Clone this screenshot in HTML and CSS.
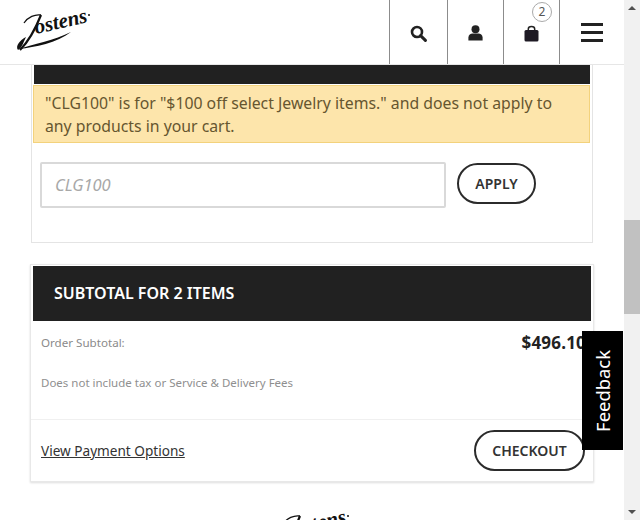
FILE: index.html
```html
<!DOCTYPE html>
<html lang="en">
<head>
  <meta charset="UTF-8">
  <title>Shopping Cart</title>
  <link rel="stylesheet" href="styles.css">
</head>
<body>

  <div class="pagina">
    <!-- HEADER -->
    <header class="topo">
      <a class="logo" href="#">
        <svg class="logo-svg" width="76" height="40" viewBox="0 0 76 40">
          <path d="M3 37 C0 33 5 27 11 24 C8 30 7 35 3 37 Z M4 36 C18 31 38 28 56 19 C42 30 20 34 4 36 Z" fill="#111"/>
          <path d="M26 2 C22 12 14 28 5 37" fill="none" stroke="#111" stroke-width="2.2"/>
          <path d="M9 10 C13 4 20 1 26 2" fill="none" stroke="#111" stroke-width="1.3"/>
          <text class="logo-texto" x="21" y="21" transform="rotate(-13 21 21)">ostens</text>
          <circle cx="74" cy="2" r="1" fill="#111"/>
        </svg>
      </a>
      <nav class="acoes">
        <a class="acao acao-busca" href="#">
          <svg width="17" height="17" viewBox="0 0 17 17"><circle cx="7" cy="7" r="5" fill="none" stroke="#222" stroke-width="2.6"/><path d="M10.6 10.6 L15.4 15.4" stroke="#222" stroke-width="3" stroke-linecap="round"/></svg>
        </a>
        <a class="acao" href="#">
          <svg width="15" height="16" viewBox="0 0 15 16"><circle cx="7.5" cy="4.2" r="4" fill="#222"/><path d="M0.4 15.6 V12.5 C0.4 9.8 2.6 8.6 4.6 8.6 H10.4 C12.4 8.6 14.6 9.8 14.6 12.5 V15.6 Z" fill="#222"/></svg>
        </a>
        <a class="acao acao-sacola" href="#">
          <span class="contador">2</span>
          <svg width="15" height="17" viewBox="0 0 15 17"><path d="M4.3 6 V4 C4.3 0.6 10.7 0.6 10.7 4 V6" fill="none" stroke="#222" stroke-width="1.5"/><rect x="0.5" y="5" width="14" height="11.5" rx="1.5" fill="#1e1a24"/></svg>
        </a>
        <a class="acao acao-menu" href="#">
          <span></span><span></span><span></span>
        </a>
      </nav>
    </header>

    <main class="conteudo">
      <!-- PROMO -->
      <section class="cartao cartao-promo">
        <div class="faixa-topo"></div>
        <div class="aviso">"CLG100" is for "$100 off select Jewelry items." and does not apply to any products in your cart.</div>
        <form class="promo-form">
          <input class="promo-input" type="text" placeholder="CLG100">
          <button class="botao botao-apply" type="button">APPLY</button>
        </form>
      </section>

      <!-- SUBTOTAL -->
      <section class="cartao cartao-total">
        <h2 class="total-titulo">SUBTOTAL FOR 2 ITEMS</h2>
        <div class="total-corpo">
          <div class="total-linha">
            <span class="total-label">Order Subtotal:</span>
            <strong class="total-valor">$496.10</strong>
          </div>
          <p class="total-nota">Does not include tax or Service &amp; Delivery Fees</p>
        </div>
        <div class="total-rodape">
          <a class="link-pagamento" href="#">View Payment Options</a>
          <button class="botao botao-checkout" type="button">CHECKOUT</button>
        </div>
      </section>

      <div class="rodape-logo">
        <svg class="logo-svg" width="76" height="40" viewBox="0 0 76 40">
          <path d="M3 37 C0 33 5 27 11 24 C8 30 7 35 3 37 Z M4 36 C18 31 38 28 56 19 C42 30 20 34 4 36 Z" fill="#111"/>
          <path d="M26 2 C22 12 14 28 5 37" fill="none" stroke="#111" stroke-width="2.2"/>
          <path d="M9 10 C13 4 20 1 26 2" fill="none" stroke="#111" stroke-width="1.3"/>
          <text class="logo-texto" x="21" y="21" transform="rotate(-13 21 21)">ostens</text>
          <circle cx="74" cy="2" r="1" fill="#111"/>
        </svg>
      </div>
    </main>

    <a class="feedback" href="#"><span>Feedback</span></a>
  </div>

  <!-- SCROLLBAR -->
  <div class="barra">
    <span class="seta seta-cima"></span>
    <div class="trilho"><div class="polegar"></div></div>
    <span class="seta seta-baixo"></span>
  </div>

</body>
</html>
```

FILE: styles.css
```css
html, body {
  height: 100%;
}

body {
  margin: 0;
  display: flex;
  height: 520px;
  overflow: hidden;
  background: #fff;
  color: #222;
  font-family: "Noto Sans", "Open Sans", sans-serif;
}

.pagina {
  position: relative;
  width: 624px;
  height: 520px;
  overflow: hidden;
}

/* header */

.topo {
  box-sizing: border-box;
  display: flex;
  justify-content: space-between;
  height: 65px;
  border-bottom: 1px solid #e6e6e6;
}

.logo {
  display: block;
  padding: 13px 0 0 15px;
}

.logo-svg {
  overflow: visible;
}

.logo-texto {
  font-family: "Liberation Serif", serif;
  font-style: italic;
  font-weight: 700;
  font-size: 21px;
  fill: #111;
}

.acoes {
  display: flex;
}

.acao {
  box-sizing: border-box;
  display: flex;
  justify-content: center;
  align-items: center;
  width: 56px;
  padding-top: 2px;
  border-left: 1px solid #8c8c8c;
}

.acao-busca {
  width: 58px;
}

.acao-sacola {
  position: relative;
}

.contador {
  position: absolute;
  top: 2px;
  left: 28px;
  width: 18px;
  height: 18px;
  border: 1px solid #aaa;
  border-radius: 50%;
  font-size: 12px;
  line-height: 18px;
  text-align: center;
  color: #555;
}

.acao-menu {
  flex-direction: column;
  gap: 5px;
  width: 65px;
  padding: 1px 0 0;
}

.acao-menu span {
  display: block;
  width: 22px;
  height: 3px;
  margin-right: 1px;
  background: #222;
}

/* content */

.conteudo {
  padding: 0 30px;
}

.cartao {
  box-sizing: border-box;
  background: #fff;
}

.cartao-promo {
  height: 178px;
  margin: 0 1px;
  padding: 0 2px;
  border: 1px solid #e4e4e4;
  border-top: 0;
}

.faixa-topo {
  height: 19px;
  background: #212121;
}

.aviso {
  margin: 1px 0 0 -1px;
  padding: 6px 11px 5px;
  height: 58px;
  box-sizing: border-box;
  background: #fde5ab;
  border: 1px solid #f3d27c;
  font-size: 15.8px;
  line-height: 23px;
  color: #665630;
}

.promo-form {
  display: flex;
  align-items: flex-start;
  gap: 11px;
  margin: 19px 0 0 6px;
}

.promo-input {
  box-sizing: border-box;
  width: 406px;
  height: 46px;
  padding: 0 13px 2px;
  border: 2px solid #d9d9d9;
  border-radius: 2px;
  font-family: inherit;
  font-size: 16.5px;
  font-style: italic;
}

.promo-input::placeholder {
  color: #a8a8a8;
}

.botao {
  box-sizing: border-box;
  height: 41px;
  background: #fff;
  border: 2px solid #2b2b2b;
  border-radius: 21px;
  font-family: inherit;
  font-size: 14px;
  font-weight: 600;
  color: #333;
}

.botao-apply {
  width: 79px;
  margin-top: 1px;
  padding: 0;
}

.cartao-total {
  height: 218px;
  margin-top: 21px;
  padding-top: 1px;
  border: 1px solid #e8e8e8;
  box-shadow: 0 1px 2px #ddd;
}

.total-titulo {
  height: 55px;
  margin: 0 2px;
  padding-left: 21px;
  background: #212121;
  color: #fff;
  font-size: 16px;
  font-weight: 600;
  line-height: 55px;
}

.total-corpo {
  box-sizing: border-box;
  height: 99px;
  padding: 0 7px 0 10px;
  border-bottom: 1px solid #f0f0f0;
}

.total-linha {
  display: flex;
  justify-content: space-between;
  padding-top: 10px;
}

.total-label {
  margin-top: 4px;
  font-size: 11.6px;
  color: #8a8a8a;
}

.total-valor {
  font-size: 17px;
  letter-spacing: 0.2px;
  font-weight: 700;
  color: #222;
}

.total-nota {
  margin: 21px 0 0;
  font-size: 11.5px;
  color: #8f8f8f;
}

.total-rodape {
  display: flex;
  justify-content: space-between;
  align-items: center;
  padding: 10px 8px 0 10px;
}

.link-pagamento {
  font-size: 13.6px;
  color: #333;
}

.botao-checkout {
  width: 111px;
  padding: 0;
}

.rodape-logo {
  display: flex;
  justify-content: center;
  margin-top: 32px;
}

/* feedback tab */

.feedback {
  position: absolute;
  top: 331px;
  left: 582px;
  display: flex;
  justify-content: center;
  align-items: center;
  width: 41px;
  height: 119px;
  background: #000;
  color: #fff;
  font-size: 18.4px;
  text-decoration: none;
}

.feedback span {
  writing-mode: vertical-rl;
  transform: rotate(180deg);
}

/* scrollbar */

.barra {
  display: flex;
  flex-direction: column;
  align-items: center;
  width: 16px;
  height: 520px;
  background: #f1f1f1;
}

.seta {
  flex: none;
  width: 0;
  height: 0;
  margin: 6px 0;
  border-left: 4px solid transparent;
  border-right: 4px solid transparent;
}

.seta-cima {
  border-bottom: 4px solid #505050;
}

.seta-baixo {
  border-top: 4px solid #505050;
}

.trilho {
  flex: 1;
  width: 100%;
}

.polegar {
  height: 94px;
  margin-top: 204px;
  background: #c1c1c1;
}
```
